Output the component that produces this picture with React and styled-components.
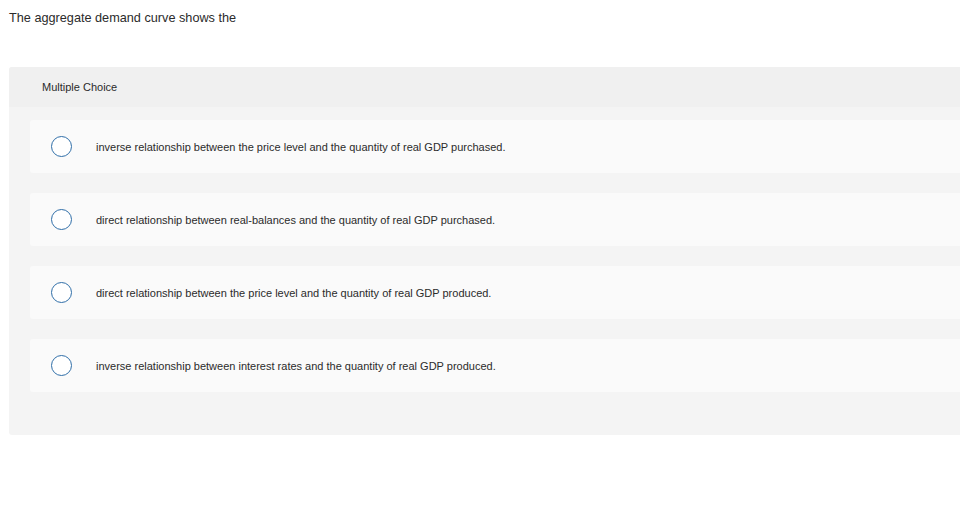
import React from "react";
import styled, { createGlobalStyle } from "styled-components";

const Global = createGlobalStyle`
  body {
    margin: 0;
    background: #fff;
    font-family: "Liberation Sans", Arial, sans-serif;
    color: #2b2b2b;
  }
`;

const Page = styled.div`
  width: 960px;
  height: 505px;
  padding: 10px 0 0 9px;
  box-sizing: border-box;
`;

const Question = styled.p`
  margin: 0;
  font-size: 12.7px;
  line-height: 16px;
`;

const Panel = styled.div`
  margin-top: 41px;
  background: #f4f4f4;
  border-radius: 3px 0 0 3px;
  overflow: hidden;
`;

const PanelHeader = styled.div`
  height: 40px;
  background: #f0f0f0;
  display: flex;
  align-items: center;
  padding-left: 33px;
  font-size: 11px;
`;

const Options = styled.div`
  display: flex;
  flex-direction: column;
  gap: 20px;
  padding: 13px 0 43px 21px;
`;

const Option = styled.label`
  height: 53px;
  background: #fafafa;
  border-radius: 3px 0 0 3px;
  display: flex;
  align-items: center;
  padding-left: 21px;
  font-size: 11px;
  cursor: pointer;
`;

const Radio = styled.span`
  width: 19px;
  height: 19px;
  border: 1.5px solid #2f6ea8;
  border-radius: 50%;
  background: #fff;
  flex: none;
  margin-right: 24px;
`;

const choices = [
  "inverse relationship between the price level and the quantity of real GDP purchased.",
  "direct relationship between real-balances and the quantity of real GDP purchased.",
  "direct relationship between the price level and the quantity of real GDP produced.",
  "inverse relationship between interest rates and the quantity of real GDP produced.",
];

export default function App() {
  return (
    <Page>
      <Global />
      <Question>The aggregate demand curve shows the</Question>
      <Panel>
        <PanelHeader>Multiple Choice</PanelHeader>
        <Options>
          {choices.map((c) => (
            <Option key={c}>
              <Radio />
              {c}
            </Option>
          ))}
        </Options>
      </Panel>
    </Page>
  );
}
